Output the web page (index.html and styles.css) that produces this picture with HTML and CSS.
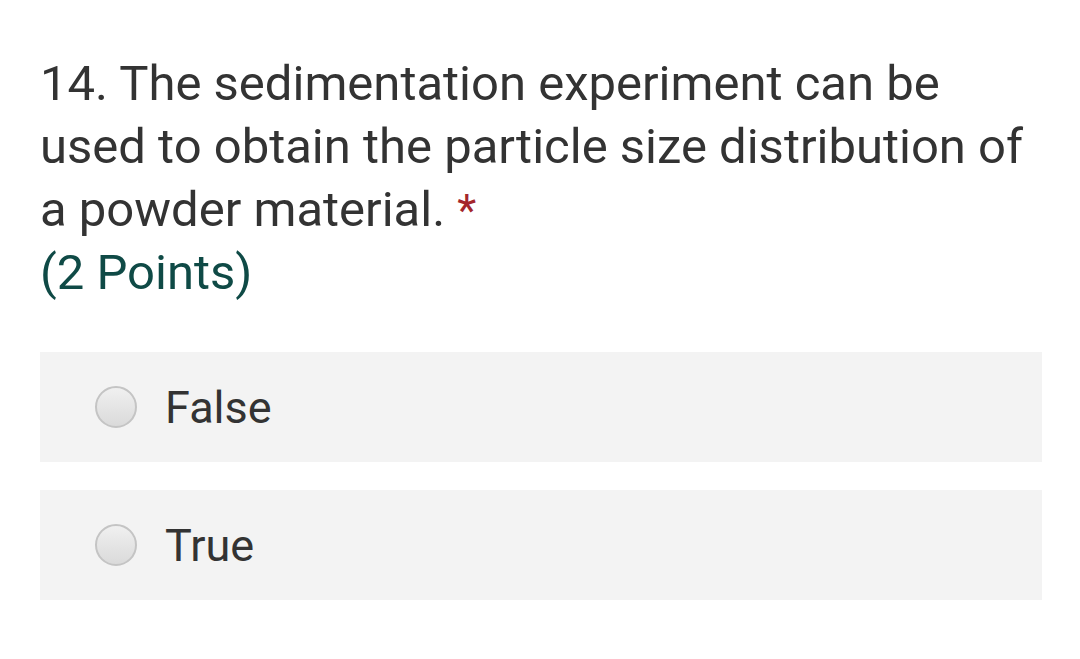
FILE: index.html
```html
<!DOCTYPE html>
<html>
<head>
<meta charset="utf-8">
<link rel="stylesheet" href="styles.css">
</head>
<body>
<div class="question">
  <div class="title">14. The sedimentation experiment can be used to obtain the particle size distribution of a powder material. <span class="req">*</span></div>
  <div class="points">(2 Points)</div>
  <div class="options">
    <div class="option"><span class="radio"></span><span class="label">False</span></div>
    <div class="option"><span class="radio"></span><span class="label">True</span></div>
  </div>
</div>
</body>
</html>
```
FILE: styles.css
```css
html, body {
  margin: 0;
  padding: 0;
  background: #ffffff;
}
body {
  font-family: Roboto, "Liberation Sans", sans-serif;
  color: #333333;
}
.question {
  padding: 52px 30px 0 40px;
}
.title {
  font-size: 49px;
  line-height: 63px;
  color: #333333;
  width: 1000px;
}
.req {
  color: #a4262c;
  font-size: 44px;
  line-height: 1;
}
.points {
  font-size: 49px;
  line-height: 63px;
  color: #0f4a46;
}
.options {
  margin-top: 48px;
  display: flex;
  flex-direction: column;
  gap: 28px;
  width: 1002px;
}
.option {
  background: #f3f3f3;
  height: 110px;
  display: flex;
  align-items: center;
  padding-left: 55px;
}
.radio {
  width: 42px;
  height: 42px;
  border-radius: 50%;
  border: 2px solid #c4c4c4;
  background: linear-gradient(#f0f0f0, #dadada);
  box-sizing: border-box;
  flex: none;
}
.label {
  margin-left: 28px;
  font-size: 45px;
  color: #333333;
}
```
